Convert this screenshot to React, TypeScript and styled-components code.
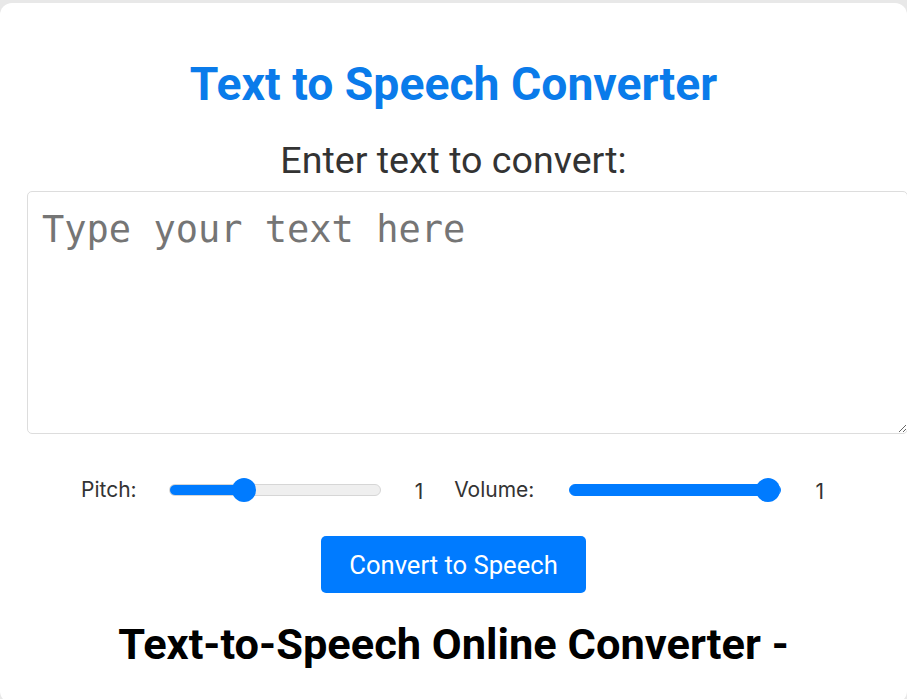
import React, { useState } from "react";
import styled, { createGlobalStyle } from "styled-components";

const Global = createGlobalStyle`
  html, body {
    margin: 0;
    padding: 0;
    background: #e8e8e8;
    overflow: hidden;
  }
  * { box-sizing: border-box; }
`;

const Card = styled.main`
  margin-top: 3px;
  background: #ffffff;
  border-radius: 12px;
  min-height: 700px;
  padding: 54px 0 0 27px;
  display: flex;
  flex-direction: column;
  align-items: flex-start;
`;

const Title = styled.h1`
  align-self: center;
  margin: 0 0 0 -27px;
  font-family: Roboto, "Liberation Sans", sans-serif;
  font-weight: 700;
  font-size: 46.3px;
  line-height: 54px;
  color: #0a7bea;
`;

const FieldLabel = styled.label`
  align-self: center;
  margin: 27px 0 0 -27px;
  font-family: Roboto, "Liberation Sans", sans-serif;
  font-size: 37.6px;
  line-height: 44px;
  color: #333333;
`;

const TextBox = styled.textarea`
  margin-top: 9px;
  width: 881px;
  height: 243px;
  padding: 16px 14px;
  border: 1px solid #dddddd;
  border-radius: 5px;
  font-family: "DejaVu Sans Mono", monospace;
  font-size: 37px;
  color: #333;
  resize: both;
  outline: none;
  &::placeholder {
    color: #757575;
  }
`;

const Controls = styled.div`
  align-self: stretch;
  margin: 37px 0 0 54px;
  display: flex;
  align-items: center;
  height: 36px;
  font-family: Inter, "Noto Sans", sans-serif;
  font-size: 21px;
  color: #333333;
`;

const Label = styled.span<{ $gap: number }>`
  margin-right: ${(p) => p.$gap}px;
`;

const Value = styled.span`
  margin: 4px 31px 0 34px;
  color: #333;
`;

const Range = styled.input`
  -webkit-appearance: none;
  appearance: none;
  width: 212px;
  height: 12px;
  margin: 2px 0 0;
  border-radius: 6px;
  border: 1px solid #d6d6d6;
  outline: none;
  &::-webkit-slider-thumb {
    -webkit-appearance: none;
    appearance: none;
    width: 24px;
    height: 24px;
    border-radius: 50%;
    background: #007bff;
    border: none;
    cursor: pointer;
  }
`;

const Button = styled.button`
  align-self: center;
  margin: 29px 0 0 -27px;
  width: 265px;
  height: 57px;
  border: none;
  border-radius: 5px;
  background: #007bff;
  color: #ffffff;
  font-family: Roboto, "Liberation Sans", sans-serif;
  font-size: 25.6px;
  cursor: pointer;
`;

const Subheading = styled.h2`
  align-self: center;
  margin: 26px 0 0 -27px;
  font-family: Roboto, "Liberation Sans", sans-serif;
  font-weight: 700;
  font-size: 43.4px;
  line-height: 52px;
  color: #000000;
`;

function fillStyle(value: number, min: number, max: number) {
  const pct = ((value - min) / (max - min)) * 100;
  const edge = `calc(12px + ${pct / 100} * (100% - 24px))`;
  return {
    background: `linear-gradient(to right, #007bff 0, #007bff ${edge}, #efefef ${edge}, #efefef 100%)`,
    borderColor: pct >= 100 ? "#007bff" : "#d6d6d6",
  };
}

export default function App() {
  const [text, setText] = useState("");
  const [pitch, setPitch] = useState(1);
  const [volume, setVolume] = useState(1);

  return (
    <>
      <Global />
      <Card>
        <Title>Text to Speech Converter</Title>
        <FieldLabel htmlFor="tts-text">Enter text to convert:</FieldLabel>
        <TextBox
          id="tts-text"
          placeholder="Type your text here"
          value={text}
          onChange={(e) => setText(e.target.value)}
        />
        <Controls>
          <Label $gap={32}>Pitch:</Label>
          <Range
            type="range"
            min={0.5}
            max={2}
            step={0.1}
            value={pitch}
            style={fillStyle(pitch, 0.5, 2)}
            onChange={(e) => setPitch(Number(e.target.value))}
          />
          <Value>{pitch}</Value>
          <Label $gap={35}>Volume:</Label>
          <Range
            type="range"
            min={0}
            max={1}
            step={0.1}
            value={volume}
            style={fillStyle(volume, 0, 1)}
            onChange={(e) => setVolume(Number(e.target.value))}
          />
          <Value>{volume}</Value>
        </Controls>
        <Button type="button">Convert to Speech</Button>
        <Subheading>Text-to-Speech Online Converter -</Subheading>
      </Card>
    </>
  );
}
